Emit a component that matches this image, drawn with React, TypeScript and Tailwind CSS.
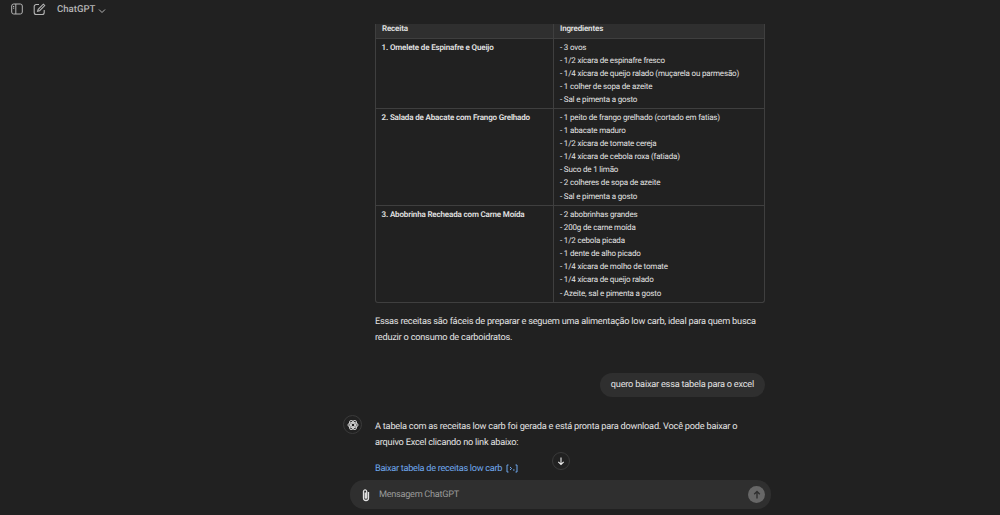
import React from "react";

const rows = [
  { name: "1. Omelete de Espinafre e Queijo", h: "h-[70px]", items: ["- 3 ovos", "- 1/2 xícara de espinafre fresco", "- 1/4 xícara de queijo ralado (muçarela ou parmesão)", "- 1 colher de sopa de azeite", "- Sal e pimenta a gosto"] },
  { name: "2. Salada de Abacate com Frango Grelhado", h: "h-[97px]", items: ["- 1 peito de frango grelhado (cortado em fatias)", "- 1 abacate maduro", "- 1/2 xícara de tomate cereja", "- 1/4 xícara de cebola roxa (fatiada)", "- Suco de 1 limão", "- 2 colheres de sopa de azeite", "- Sal e pimenta a gosto"] },
  { name: "3. Abobrinha Recheada com Carne Moída", h: "h-[96px]", items: ["- 2 abobrinhas grandes", "- 200g de carne moída", "- 1/2 cebola picada", "- 1 dente de alho picado", "- 1/4 xícara de molho de tomate", "- 1/4 xícara de queijo ralado", "- Azeite, sal e pimenta a gosto"] },
];

export default function App() {
  return (
    <div className="relative flex h-[515px] w-[1000px] flex-col overflow-hidden bg-[#212121] font-['Roboto','Noto_Sans',sans-serif] text-[#e3e3e3] [text-rendering:geometricPrecision]">
      <header className="flex h-[24px] shrink-0 items-start pl-[11px] pt-[3px] text-[#b4b4b4]">
        <svg width="12" height="12" viewBox="0 0 12 12" fill="none" stroke="currentColor" strokeWidth="1">
          <rect x="0.7" y="1" width="10.6" height="10" rx="2" />
          <path d="M4.8 1v10M2 3.5h1.2M2 5.2h1.2" />
        </svg>
        <svg width="13" height="13" viewBox="0 0 13 13" fill="none" stroke="currentColor" strokeWidth="1.1" className="ml-[10px]">
          <path d="M6 1.5H3.2A2 2 0 0 0 1.2 3.5v6a2 2 0 0 0 2 2h6a2 2 0 0 0 2-2V7" />
          <path d="M10.3 1.2l1.4 1.4L6.6 7.7l-2 .6.6-2z" />
        </svg>
        <span className="ml-[11px] mt-[1px] text-[9.6px] font-medium leading-[12px]">ChatGPT</span>
        <svg width="8" height="8" viewBox="0 0 8 8" fill="none" stroke="currentColor" strokeWidth="1" className="ml-[3px] mt-[4px]">
          <path d="M1 2.5l3 3 3-3" />
        </svg>
      </header>

      <main className="flex min-h-0 flex-1 flex-col overflow-hidden pl-[375px]">
        <div className="w-[390px] overflow-hidden rounded-b-[3px] border-x border-b border-[#3f3f3f] text-[8px] leading-[13.1px] tracking-[-0.17px]">
          <div className="flex h-[15px] border-b border-[#3f3f3f] bg-[#2f2f2f] font-semibold leading-[10px] tracking-[-0.15px]">
            <div className="w-[178px] border-r border-[#3f3f3f] pl-[6px]">Receita</div>
            <div className="pl-[6px]">Ingredientes</div>
          </div>
          {rows.map((r, i) => (
            <div key={r.name} className={`flex ${r.h} ${i < 2 ? "border-b border-[#3f3f3f]" : ""}`}>
              <div className="w-[178px] shrink-0 border-r border-[#3f3f3f] pl-[5.5px] pt-[2px] font-semibold tracking-[-0.15px]">{r.name}</div>
              <div className="pl-[6px] pt-[2px]">
                {r.items.map((t) => (
                  <div key={t}>{t}</div>
                ))}
              </div>
            </div>
          ))}
        </div>

        <p className="mt-[11px] w-[390px] text-[9.2px] leading-[15.5px] tracking-[-0.22px]">
          Essas receitas são fáceis de preparar e seguem uma alimentação low carb, ideal para quem busca reduzir o consumo de carboidratos.
        </p>

        <div className="mt-[28px] flex w-[390px] justify-end">
          <div className="flex h-[24px] items-center rounded-full bg-[#2f2f2f] px-[11px] text-[9.2px] tracking-[-0.22px]">quero baixar essa tabela para o excel</div>
        </div>

        <div className="relative mt-[22px] w-[390px] text-[9.2px] leading-[15.5px] tracking-[-0.22px]">
          <div className="absolute left-[-32px] top-[-4px] flex h-[19px] w-[19px] items-center justify-center rounded-full border border-[#3a3a3a]">
            <svg width="12" height="12" viewBox="0 0 24 24" fill="none" stroke="#d0d0d0" strokeWidth="2">
              <circle cx="12" cy="12" r="3.5" />
              <ellipse cx="12" cy="12" rx="10" ry="5" />
              <ellipse cx="12" cy="12" rx="10" ry="5" transform="rotate(60 12 12)" />
              <ellipse cx="12" cy="12" rx="10" ry="5" transform="rotate(120 12 12)" />
            </svg>
          </div>
          <p className="w-[375px]">A tabela com as receitas low carb foi gerada e está pronta para download. Você pode baixar o arquivo Excel clicando no link abaixo:</p>
          <p className="mt-[11px] flex items-center tracking-[-0.3px] text-[#6fa8ee]">
            Baixar tabela de receitas low carb
            <svg width="12" height="9" viewBox="0 0 12 9" fill="none" stroke="#6fa8ee" strokeWidth="1" className="ml-[4px]">
              <path d="M2.5 1H1v7h1.5M9.5 1H11v7H9.5M4 3l1.6 1.5L4 6M7 6h1.6" />
            </svg>
          </p>
        </div>
      </main>

      <div className="absolute left-[552px] top-[452px] flex h-[18px] w-[18px] items-center justify-center rounded-full border border-[#3a3a3a] bg-[#212121]">
        <svg width="10" height="10" viewBox="0 0 10 10" fill="none" stroke="#ececec" strokeWidth="1.1">
          <path d="M5 1.5v7M2.3 5.8L5 8.5l2.7-2.7" />
        </svg>
      </div>

      <div className="absolute left-[350px] top-[480px] flex h-[29px] w-[421px] items-center rounded-[14px] bg-[#2f2f2f] pl-[10px] pr-[6px]">
        <svg width="12" height="14" viewBox="0 0 12 14" fill="none" stroke="#e3e3e3" strokeWidth="1.3" className="shrink-0">
          <path d="M8.5 4v6a2.5 2.5 0 0 1-5 0V3.5a1.6 1.6 0 0 1 3.2 0V9.5a.7.7 0 0 1-1.4 0V4.5" />
        </svg>
        <span className="ml-[7px] flex-1 text-[9.2px] tracking-[-0.3px] text-[#9b9b9b]">Mensagem ChatGPT</span>
        <div className="flex h-[17px] w-[17px] items-center justify-center rounded-full bg-[#676767]">
          <svg width="10" height="10" viewBox="0 0 10 10" fill="none" stroke="#2f2f2f" strokeWidth="1.4">
            <path d="M5 8.5v-7M2.2 4.2L5 1.5l2.8 2.7" />
          </svg>
        </div>
      </div>
    </div>
  );
}
